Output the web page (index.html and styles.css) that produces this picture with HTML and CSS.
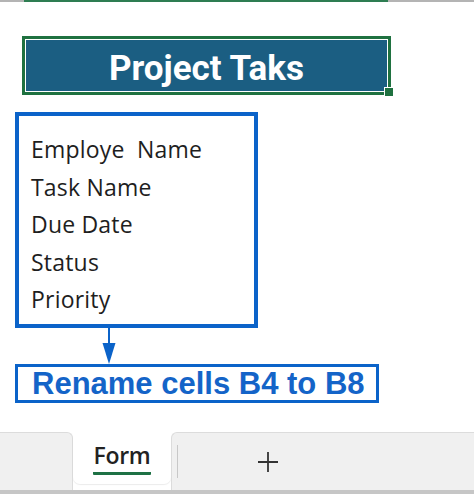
FILE: index.html
```html
<!DOCTYPE html>
<html>
<head>
<meta charset="utf-8">
<link rel="stylesheet" href="styles.css">
</head>
<body>
<div class="page">
  <div class="topline"><div class="topline-green"></div></div>
  <div class="title">
    <div class="title-inner">Project Taks</div>
    <div class="handle"></div>
  </div>
  <div class="list">
    <div class="item">Employe&nbsp; Name</div>
    <div class="item">Task Name</div>
    <div class="item">Due Date</div>
    <div class="item">Status</div>
    <div class="item">Priority</div>
  </div>
  <div class="arrow">
    <svg width="40" height="36" viewBox="0 0 40 36">
      <line x1="26" y1="0" x2="26" y2="18" stroke="#0b63c9" stroke-width="2"/>
      <polygon points="19.5,15 32.5,15 26,36" fill="#0b63c9"/>
    </svg>
  </div>
  <div class="rename">Rename cells B4 to B8</div>
  <div class="tabbar">
    <div class="tabs">
      <div class="gap-left"></div>
      <div class="tab"><span class="tab-label">Form</span></div>
      <div class="rest">
        <div class="sep"></div>
        <div class="plus">
          <svg width="22" height="22" viewBox="0 0 22 22">
            <path d="M11 1 V21 M1 11 H21" stroke="#333" stroke-width="1.8" fill="none"/>
          </svg>
        </div>
      </div>
    </div>
    <div class="band"></div>
  </div>
</div>
</body>
</html>
```
FILE: styles.css
```css
html, body {
  margin: 0;
  padding: 0;
  background: #ffffff;
}
.page {
  width: 474px;
  height: 494px;
  overflow: hidden;
  display: flex;
  flex-direction: column;
  font-family: "Open Sans", "Liberation Sans", sans-serif;
}
.topline {
  height: 2px;
  background: #b4b4b4;
  flex: none;
}
.topline-green {
  margin-left: 24px;
  width: 364px;
  height: 2px;
  background: #2e7d52;
}
.title {
  position: relative;
  margin: 34px 0 0 22px;
  width: 369px;
  height: 59px;
  box-sizing: border-box;
  border: 3px solid #1f7140;
  padding: 1px;
  background: #ffffff;
  flex: none;
}
.title-inner {
  height: 100%;
  background: #1b5e82;
  color: #ffffff;
  font-family: "Roboto", "Liberation Sans", sans-serif;
  font-weight: bold;
  font-size: 35px;
  line-height: 57px;
  text-align: center;
  letter-spacing: 0px;
}
.handle {
  position: absolute;
  right: -6px;
  bottom: -5px;
  width: 8px;
  height: 8px;
  background: #1f7140;
  border: 1px solid #ffffff;
}
.list {
  margin: 17px 0 0 15px;
  width: 243px;
  height: 216px;
  box-sizing: border-box;
  border: 4px solid #0b63c9;
  padding: 15px 0 0 12px;
  flex: none;
}
.item {
  font-size: 23px;
  line-height: 37.5px;
  color: #1e1e1e;
  white-space: nowrap;
  letter-spacing: 0.2px;
}
.arrow {
  height: 36px;
  margin-left: 83px;
  flex: none;
}
.arrow svg {
  display: block;
}
.rename {
  margin-left: 15px;
  width: 364px;
  height: 39px;
  box-sizing: border-box;
  border: 3px solid #0b63c9;
  padding-left: 14px;
  font-family: "Liberation Sans", Arial, sans-serif;
  font-weight: bold;
  font-size: 31px;
  line-height: 33px;
  color: #1464c8;
  white-space: nowrap;
  flex: none;
}
.tabbar {
  margin-top: 29px;
  height: 62px;
  display: flex;
  flex-direction: column;
  flex: none;
}
.tabs {
  flex: 1;
  display: flex;
  background: #ffffff;
}
.gap-left {
  width: 73px;
  background: #f0f0f0;
  border-top: 1px solid #dcdcdc;
  border-top-right-radius: 6px;
  border-right: 1px solid #dcdcdc;
  box-sizing: border-box;
}
.tab {
  width: 98px;
  height: 52px;
  background: #ffffff;
  border-bottom-left-radius: 7px;
  border-bottom-right-radius: 7px;
  box-shadow: 0 1px 1px rgba(0,0,0,0.08);
  display: flex;
  justify-content: center;
  align-items: flex-start;
  align-self: flex-start;
}
.tab-label {
  margin-top: 8px;
  font-size: 23px;
  font-weight: 600;
  color: #222222;
  line-height: 30px;
  padding: 0 1px 2px;
  border-bottom: 3px solid #1e7145;
  border-radius: 1px;
  letter-spacing: -0.3px;
}
.rest {
  flex: 1;
  background: #f0f0f0;
  border-top: 1px solid #dcdcdc;
  border-left: 1px solid #dcdcdc;
  border-top-left-radius: 6px;
  box-sizing: border-box;
  display: flex;
  align-items: flex-start;
}
.sep {
  width: 1px;
  height: 33px;
  margin: 12px 0 0 5px;
  background: #c8c8c8;
}
.plus {
  margin: 18px 0 0 79px;
}
.plus svg {
  display: block;
}
.band {
  height: 4px;
  background: #c6c6c6;
}
```
